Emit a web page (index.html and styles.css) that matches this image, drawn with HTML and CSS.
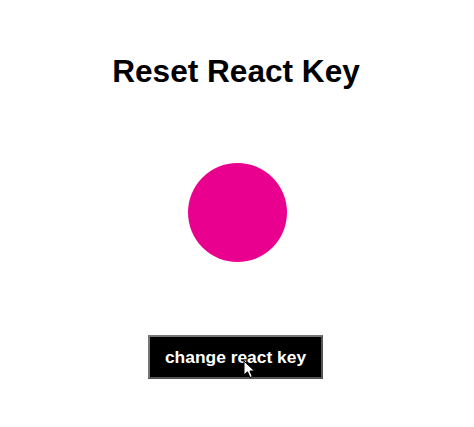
FILE: index.html
```html
<!DOCTYPE html>
<html>
<head>
<meta charset="utf-8">
<link rel="stylesheet" href="styles.css">
</head>
<body>
<main class="page">
  <h1 class="title">Reset React Key</h1>
  <div class="ball"></div>
  <div class="btn-wrap">
    <button class="btn">change react key</button>
    <svg class="cursor" width="13" height="19" viewBox="0 0 13 19">
      <path d="M1 1 L1 15 L4.5 11.8 L7 17.5 L9.3 16.5 L6.9 11 L11.5 11 Z" fill="#fff" stroke="#000" stroke-width="1" stroke-linejoin="round"/>
    </svg>
  </div>
</main>
</body>
</html>
```
FILE: styles.css
```css
html, body {
  margin: 0;
  padding: 0;
  background: #fff;
}
.page {
  display: flex;
  flex-direction: column;
  align-items: center;
  font-family: "Liberation Sans", Arial, sans-serif;
  width: 474px;
}
.title {
  margin: 53px 0 0 0;
  font-size: 31.6px;
  line-height: 36px;
  font-weight: bold;
  color: #000;
  margin-right: 2px;
}
.ball {
  margin-top: 74px;
  width: 99px;
  height: 99px;
  border-radius: 50%;
  background: #ea008f;
}
.btn-wrap {
  position: relative;
  margin-top: 73px;
  margin-right: 3px;
}
.btn {
  display: block;
  box-sizing: border-box;
  width: 175px;
  height: 44px;
  background: #000;
  color: #fff;
  border: 2px solid #767676;
  border-right-color: #555;
  border-bottom-color: #555;
  font-family: "Liberation Sans", Arial, sans-serif;
  font-weight: bold;
  font-size: 17.4px;
  padding: 0;
  margin: 0;
}
.cursor {
  position: absolute;
  left: 95px;
  top: 25px;
}
```
